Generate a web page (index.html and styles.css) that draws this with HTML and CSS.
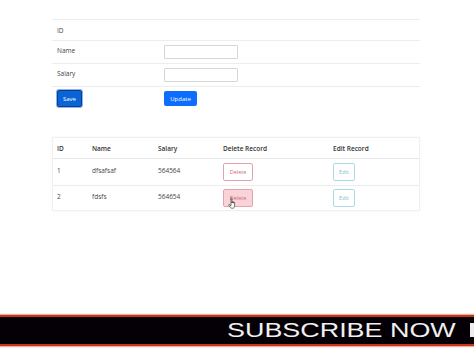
FILE: index.html
```html
<!DOCTYPE html>
<html>
<head>
<meta charset="utf-8">
<link rel="stylesheet" href="styles.css">
</head>
<body>
<div class="page">
  <div class="form">
    <div class="frow r1"><div class="lbl">ID</div><div class="fld"></div></div>
    <div class="frow r2"><div class="lbl">Name</div><div class="fld"><span class="inp"></span></div></div>
    <div class="frow r3"><div class="lbl">Salary</div><div class="fld"><span class="inp"></span></div></div>
    <div class="brow">
      <div class="lbl"><span class="btn save">Save</span></div>
      <div class="fld"><span class="btn upd">Update</span></div>
    </div>
  </div>

  <div class="card">
    <div class="trow head">
      <div class="c1">ID</div><div class="c2">Name</div><div class="c3">Salary</div><div class="c4">Delete Record</div><div class="c5">Edit Record</div>
    </div>
    <div class="trow">
      <div class="c1">1</div><div class="c2">dfsafsaf</div><div class="c3">564564</div>
      <div class="c4"><span class="obtn del">Delete</span></div>
      <div class="c5"><span class="obtn edit">Edit</span></div>
    </div>
    <div class="trow last">
      <div class="c1">2</div><div class="c2">fdsfs</div><div class="c3">564654</div>
      <div class="c4"><span class="obtn del hover">Delete<svg class="cursor" width="9" height="12" viewBox="0 0 9 12"><path d="M3 1.2c0-.6.9-.6.9 0V6l.1-1c0-.5.8-.5.8 0v1l.1-.8c0-.5.8-.5.8 0v1l.1-.5c0-.5.8-.5.8 0V9c0 1.3-.8 2.3-2.2 2.3H4c-.8 0-1.3-.4-1.8-1L.8 8.2c-.3-.5.3-1 .7-.6L3 8.8z" fill="#fff" stroke="#222" stroke-width=".6"/></svg></span></div>
      <div class="c5"><span class="obtn edit">Edit</span></div>
    </div>
  </div>
</div>

<div class="sub">
  <span class="subtext">SUBSCRIBE NOW</span>
  <span class="tail"></span>
</div>
</body>
</html>
```

FILE: styles.css
```css
html, body { margin: 0; padding: 0; background: #fff; }
body {
  width: 474px; height: 355px; overflow: hidden;
  font-family: "Open Sans", "Noto Sans", sans-serif;
  font-size: 6.5px; color: #444;
  position: relative;
}
.page { padding-top: 19px; padding-left: 52px; width: 368px; }

.form { display: flex; flex-direction: column; }
.frow { display: flex; align-items: center; border-top: 1px solid #ececec; }
.r1 { height: 20px; }
.r2, .r3 { height: 22px; }
.r2 .lbl, .r3 .lbl { margin-top: -3px; }
.r3 { border-bottom: 1px solid #ececec; }
.lbl { width: 107px; padding-left: 5px; }
.fld { flex: 1; display: flex; align-items: center; }
.inp {
  display: block; width: 72px; height: 12px;
  border: 1px solid #d6d6d6; border-radius: 1px; background: #fff;
}
.brow { display: flex; align-items: center; margin-top: 3px; height: 17px; }
.btn {
  display: inline-flex; align-items: center; justify-content: center;
  height: 15px; border-radius: 2px; color: #fff; font-size: 6px;
}
.save {
  width: 23px; background: #0a64d6; border: 1px solid #0a3f8f;
  box-shadow: 0 0 0 1px #8fb3e8;
}
.upd { width: 33px; background: #0d6efd; }

.card {
  margin-top: 30px;
  border: 1px solid #f0f0f0;
  box-shadow: 0 0 2px rgba(0,0,0,0.06);
  display: flex; flex-direction: column;
}
.trow { display: flex; align-items: center; height: 26px; border-top: 1px solid #ececec; }
.trow.last { height: 24px; }
.head { height: 20px; border-top: none; font-weight: 600; color: #333; border-bottom: 1px solid #e6e6e6; }
.head + .trow { border-top: none; }
.trow:not(.head) > .c1, .trow:not(.head) > .c2, .trow:not(.head) > .c3 { margin-top: -4px; }
.c1 { width: 39px; padding-left: 4px; box-sizing: border-box; }
.c2 { width: 66px; }
.c3 { width: 65px; }
.c4 { width: 110px; }
.c5 { flex: 1; }
.obtn {
  position: relative;
  display: inline-flex; align-items: center; justify-content: center;
  height: 16px; border-radius: 2px; font-size: 5.5px; background: #fff;
}
.del { width: 28px; border: 1px solid #e3a3aa; color: #d36b78; }
.del.hover { background: #f9d3d8; }
.edit { width: 20px; border: 1px solid #a9dbe3; color: #7cc3cf; }
.cursor { position: absolute; left: 4px; top: 7px; }

.sub {
  position: absolute; left: 0; top: 315px; width: 474px; height: 27px;
  background: #050006;
  border-top: 2px solid #c8341c; border-bottom: 2px solid #c8341c;
  box-shadow: 0 -1px 1px rgba(230,120,90,0.6), 0 1px 1px rgba(230,120,90,0.6);
  display: flex; align-items: center;
}
.subtext {
  display: inline-block; margin-left: 227px;
  font-family: "Liberation Sans", Arial, sans-serif;
  font-size: 19.5px; color: #f0f0f0; line-height: 1;
  transform: scaleX(1.38); transform-origin: left center;
  white-space: nowrap;
}
.tail {
  position: absolute; left: 470px; top: 6px; width: 4px; height: 14px; background: #eee;
}
```
